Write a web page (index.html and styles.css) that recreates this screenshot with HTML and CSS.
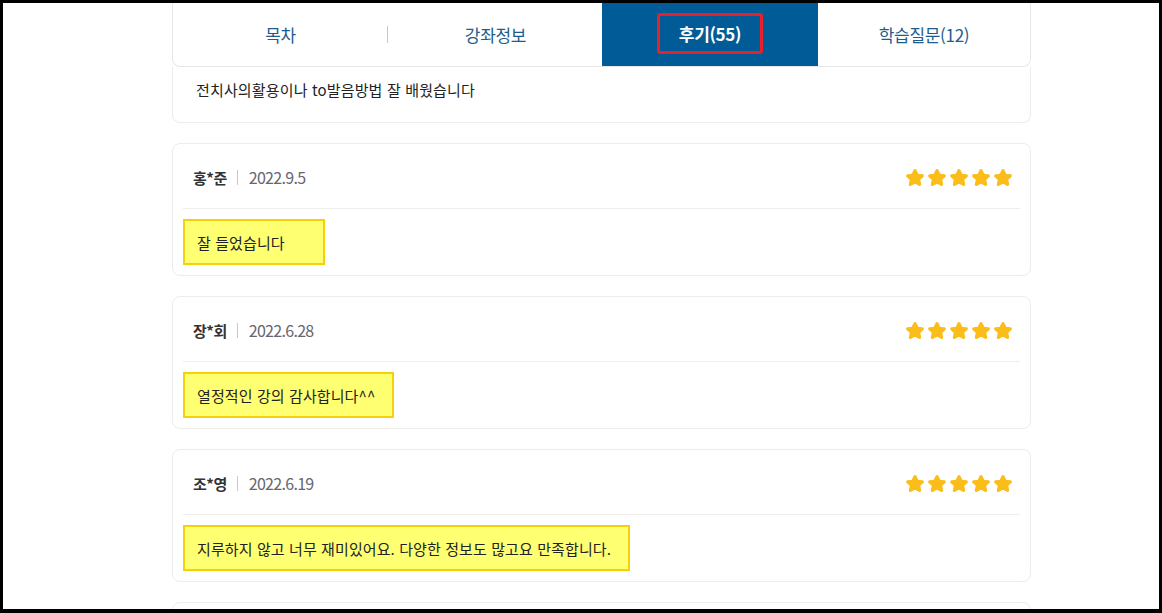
FILE: index.html
```html
<!DOCTYPE html>
<html lang="ko">
<head>
<meta charset="utf-8">
<title>후기</title>
<link rel="stylesheet" href="styles.css">
</head>
<body>
<div class="frame">
  <div class="content">
    <nav class="tabs">
      <div class="tab tab-sep">목차</div>
      <div class="tab">강좌정보</div>
      <div class="tab tab-active"><span class="tab-mark">후기(55)</span></div>
      <div class="tab">학습질문(12)</div>
    </nav>
    <div class="card-tail">전치사의활용이나 to발음방법 잘 배웠습니다</div>

    <div class="card">
      <div class="card-head">
        <div class="meta"><span class="name">홍*준</span><span class="sep"></span><span class="date">2022.9.5</span></div>
        <div class="stars">
          <svg class="star" viewBox="0 0 20 20"><polygon points="10,2.6 12.2,7.3 17.3,7.9 13.5,11.4 14.6,16.4 10,13.9 5.4,16.4 6.5,11.4 2.7,7.9 7.8,7.3"/></svg>
          <svg class="star" viewBox="0 0 20 20"><polygon points="10,2.6 12.2,7.3 17.3,7.9 13.5,11.4 14.6,16.4 10,13.9 5.4,16.4 6.5,11.4 2.7,7.9 7.8,7.3"/></svg>
          <svg class="star" viewBox="0 0 20 20"><polygon points="10,2.6 12.2,7.3 17.3,7.9 13.5,11.4 14.6,16.4 10,13.9 5.4,16.4 6.5,11.4 2.7,7.9 7.8,7.3"/></svg>
          <svg class="star" viewBox="0 0 20 20"><polygon points="10,2.6 12.2,7.3 17.3,7.9 13.5,11.4 14.6,16.4 10,13.9 5.4,16.4 6.5,11.4 2.7,7.9 7.8,7.3"/></svg>
          <svg class="star" viewBox="0 0 20 20"><polygon points="10,2.6 12.2,7.3 17.3,7.9 13.5,11.4 14.6,16.4 10,13.9 5.4,16.4 6.5,11.4 2.7,7.9 7.8,7.3"/></svg>
        </div>
      </div>
      <div class="card-body"><span class="note">잘 들었습니다&nbsp;&nbsp;&nbsp;&nbsp;&nbsp;</span></div>
    </div>

    <div class="card">
      <div class="card-head">
        <div class="meta"><span class="name">장*회</span><span class="sep"></span><span class="date">2022.6.28</span></div>
        <div class="stars">
          <svg class="star" viewBox="0 0 20 20"><polygon points="10,2.6 12.2,7.3 17.3,7.9 13.5,11.4 14.6,16.4 10,13.9 5.4,16.4 6.5,11.4 2.7,7.9 7.8,7.3"/></svg>
          <svg class="star" viewBox="0 0 20 20"><polygon points="10,2.6 12.2,7.3 17.3,7.9 13.5,11.4 14.6,16.4 10,13.9 5.4,16.4 6.5,11.4 2.7,7.9 7.8,7.3"/></svg>
          <svg class="star" viewBox="0 0 20 20"><polygon points="10,2.6 12.2,7.3 17.3,7.9 13.5,11.4 14.6,16.4 10,13.9 5.4,16.4 6.5,11.4 2.7,7.9 7.8,7.3"/></svg>
          <svg class="star" viewBox="0 0 20 20"><polygon points="10,2.6 12.2,7.3 17.3,7.9 13.5,11.4 14.6,16.4 10,13.9 5.4,16.4 6.5,11.4 2.7,7.9 7.8,7.3"/></svg>
          <svg class="star" viewBox="0 0 20 20"><polygon points="10,2.6 12.2,7.3 17.3,7.9 13.5,11.4 14.6,16.4 10,13.9 5.4,16.4 6.5,11.4 2.7,7.9 7.8,7.3"/></svg>
        </div>
      </div>
      <div class="card-body"><span class="note">열정적인 강의 감사합니다^^</span></div>
    </div>

    <div class="card">
      <div class="card-head">
        <div class="meta"><span class="name">조*영</span><span class="sep"></span><span class="date">2022.6.19</span></div>
        <div class="stars">
          <svg class="star" viewBox="0 0 20 20"><polygon points="10,2.6 12.2,7.3 17.3,7.9 13.5,11.4 14.6,16.4 10,13.9 5.4,16.4 6.5,11.4 2.7,7.9 7.8,7.3"/></svg>
          <svg class="star" viewBox="0 0 20 20"><polygon points="10,2.6 12.2,7.3 17.3,7.9 13.5,11.4 14.6,16.4 10,13.9 5.4,16.4 6.5,11.4 2.7,7.9 7.8,7.3"/></svg>
          <svg class="star" viewBox="0 0 20 20"><polygon points="10,2.6 12.2,7.3 17.3,7.9 13.5,11.4 14.6,16.4 10,13.9 5.4,16.4 6.5,11.4 2.7,7.9 7.8,7.3"/></svg>
          <svg class="star" viewBox="0 0 20 20"><polygon points="10,2.6 12.2,7.3 17.3,7.9 13.5,11.4 14.6,16.4 10,13.9 5.4,16.4 6.5,11.4 2.7,7.9 7.8,7.3"/></svg>
          <svg class="star" viewBox="0 0 20 20"><polygon points="10,2.6 12.2,7.3 17.3,7.9 13.5,11.4 14.6,16.4 10,13.9 5.4,16.4 6.5,11.4 2.7,7.9 7.8,7.3"/></svg>
        </div>
      </div>
      <div class="card-body"><span class="note">지루하지 않고 너무 재미있어요. 다양한 정보도 많고요 만족합니다.</span></div>
    </div>

    <div class="card"></div>
  </div>
</div>
</body>
</html>
```
FILE: styles.css
```css
* { box-sizing: border-box; }
html, body { margin: 0; padding: 0; background: #000; }
body {
  font-family: "Noto Sans CJK KR", "Noto Sans", sans-serif;
  color: #222;
}
.frame {
  width: 1162px;
  height: 613px;
  border: 3px solid #000;
  border-bottom-width: 4px;
  background: #fff;
  overflow: hidden;
}
.content {
  width: 859px;
  margin-left: 169px;
}
.tabs {
  display: grid;
  grid-template-columns: 215px 215px 215px 1fr;
  height: 64px;
  border: 1px solid #e6e6e6;
  border-top: 0;
  border-radius: 0 0 8px 8px;
  background: #fff;
}
.tab {
  display: flex;
  align-items: center;
  justify-content: center;
  font-size: 17px;
  color: #1d5d8e;
  letter-spacing: -0.3px;
  position: relative;
}
.tab-sep::after {
  content: "";
  position: absolute;
  right: 0;
  top: 23px;
  width: 1px;
  height: 17px;
  background: #c8c8c8;
}
.tab-active {
  background: #005b97;
  color: #fff;
  font-weight: 700;
  margin-left: -1px;
}
.tab-mark {
  display: inline-flex;
  align-items: center;
  justify-content: center;
  width: 106px;
  height: 41px;
  border: 3px solid #e5222b;
  border-radius: 3px;
  margin-top: -2px;
}
.card-tail {
  height: 56px;
  border: 1px solid #ececec;
  border-top: 0;
  border-radius: 0 0 8px 8px;
  padding: 12px 23px 0;
  font-size: 15px;
  line-height: 22px;
  color: #222;
  letter-spacing: 0.15px;
}
.card {
  margin-top: 20px;
  border: 1px solid #ececec;
  border-radius: 8px;
  padding: 0 10px 10px;
  height: 133px;
}
.card-head {
  height: 65px;
  padding: 2px 7px 0 10px;
  border-bottom: 1px solid #eeeeee;
  display: flex;
  align-items: center;
  justify-content: space-between;
}
.meta {
  display: flex;
  align-items: center;
}
.name {
  font-size: 15px;
  font-weight: 700;
  color: #333;
  letter-spacing: -0.5px;
}
.sep {
  width: 1px;
  height: 15px;
  background: #c9c9c9;
  margin: 0 11px 0 10px;
}
.date {
  font-size: 16px;
  color: #666670;
  letter-spacing: -0.7px;
}
.stars {
  display: flex;
  gap: 2px;
  padding-top: 2px;
}
.star {
  width: 20px;
  height: 20px;
  fill: #fbbd1a;
  stroke: #fbbd1a;
  stroke-width: 3.2;
  stroke-linejoin: round;
}
.card-body {
  padding-top: 10px;
}
.note {
  display: inline-block;
  height: 46px;
  padding: 0 17px 0 12px;
  line-height: 44px;
  border: 2px solid #f5d10c;
  background: #ffff72;
  font-size: 15px;
  color: #222;
  letter-spacing: 0.1px;
}
```
